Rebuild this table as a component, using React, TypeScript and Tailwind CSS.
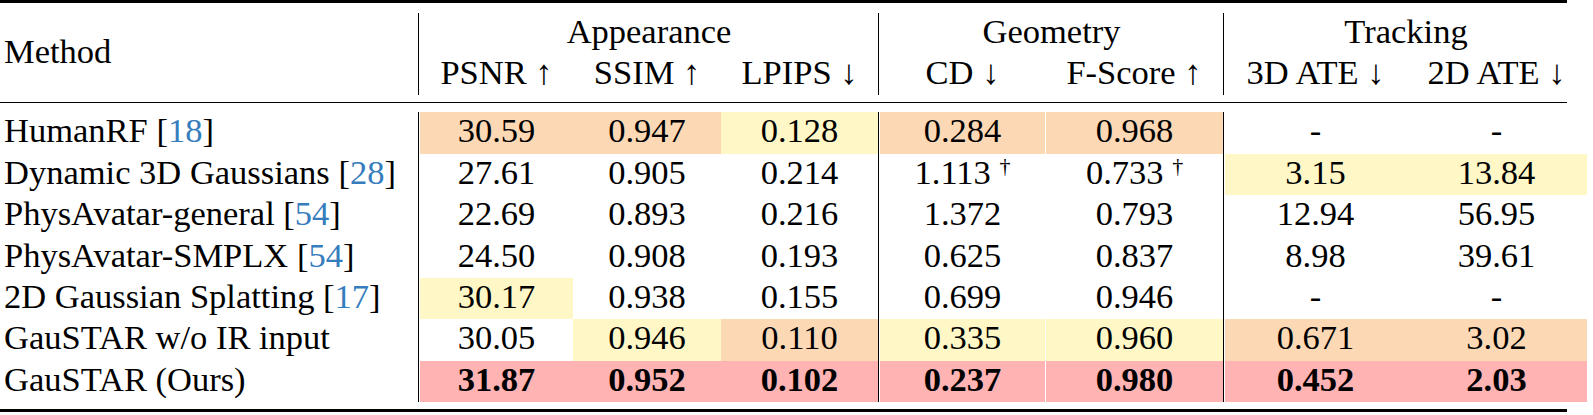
type Shade = '' | 'o' | 'y' | 'r';

interface Row {
  name: string;
  cite?: string;
  vals: string[];
  shade: Shade[];
  dagger?: boolean;
  bold?: boolean;
}

const SHADE: Record<Shade, string> = {
  '': '',
  o: 'bg-[#fdd8b5]',
  y: 'bg-[#fff8c6]',
  r: 'bg-[#ffb3b3]',
};

const ROWS: Row[] = [
  { name: 'HumanRF', cite: '18', vals: ['30.59', '0.947', '0.128', '0.284', '0.968', '-', '-'], shade: ['o', 'o', 'y', 'o', 'o', '', ''] },
  { name: 'Dynamic 3D Gaussians', cite: '28', vals: ['27.61', '0.905', '0.214', '1.113', '0.733', '3.15', '13.84'], shade: ['', '', '', '', '', 'y', 'y'], dagger: true },
  { name: 'PhysAvatar-general', cite: '54', vals: ['22.69', '0.893', '0.216', '1.372', '0.793', '12.94', '56.95'], shade: ['', '', '', '', '', '', ''] },
  { name: 'PhysAvatar-SMPLX', cite: '54', vals: ['24.50', '0.908', '0.193', '0.625', '0.837', '8.98', '39.61'], shade: ['', '', '', '', '', '', ''] },
  { name: '2D Gaussian Splatting', cite: '17', vals: ['30.17', '0.938', '0.155', '0.699', '0.946', '-', '-'], shade: ['y', '', '', '', '', '', ''] },
  { name: 'GauSTAR w/o IR input', vals: ['30.05', '0.946', '0.110', '0.335', '0.960', '0.671', '3.02'], shade: ['', 'y', 'o', 'y', 'y', 'o', 'o'] },
  { name: 'GauSTAR (Ours)', vals: ['31.87', '0.952', '0.102', '0.237', '0.980', '0.452', '2.03'], shade: ['r', 'r', 'r', 'r', 'r', 'r', 'r'], bold: true },
];

const COLS = 'grid grid-cols-[418px_2px_153px_148px_157px_2px_165px_178px_2px_181px_181px]';

function VLine({ className = '' }: { className?: string }) {
  return (
    <div className={`h-full ${className}`}>
      <div className="w-[1.4px] h-full bg-black" />
    </div>
  );
}

function Cell({ value, shade, dagger, bold, split }: { value: string; shade: Shade; dagger?: boolean; bold?: boolean; split?: boolean }) {
  return (
    <div className={`h-[41.4px] text-center ${SHADE[shade]} ${bold ? 'font-bold' : ''} ${split ? 'border-l border-white' : ''}`}>
      {value}
      {dagger && value !== '-' && (
        <>
          {' '}
          <span className="relative -top-[11px] text-[22px]">†</span>
        </>
      )}
    </div>
  );
}

export default function App() {
  return (
    <div className="w-[1593px] h-[415px] bg-white text-black [font-family:'Liberation_Serif','Times_New_Roman',serif] text-[34.5px] leading-[36.8px]">
      <div className="w-[1567px] h-[3px] bg-black" />
      <div className="h-[9.5px]" />

      {/* header */}
      <div className={`${COLS} grid-rows-[41.4px_41.4px]`}>
        <div className="col-start-1 row-start-1 row-span-2 flex items-center pl-[4px] pb-[4px]">Method</div>
        <VLine className="col-start-2 row-start-1 row-span-2" />
        <div className="col-start-3 col-span-3 row-start-1 text-center">Appearance</div>
        <VLine className="col-start-6 row-start-1 row-span-2" />
        <div className="col-start-7 col-span-2 row-start-1 text-center">Geometry</div>
        <VLine className="col-start-9 row-start-1 row-span-2" />
        <div className="col-start-10 col-span-2 row-start-1 text-center">Tracking</div>

        <div className="col-start-3 row-start-2 text-center">PSNR ↑</div>
        <div className="col-start-4 row-start-2 text-center">SSIM ↑</div>
        <div className="col-start-5 row-start-2 text-center">LPIPS ↓</div>
        <div className="col-start-7 row-start-2 text-center">CD ↓</div>
        <div className="col-start-8 row-start-2 text-center">F-Score ↑</div>
        <div className="col-start-10 row-start-2 text-center">3D ATE ↓</div>
        <div className="col-start-11 row-start-2 text-center">2D ATE ↓</div>
      </div>

      <div className="h-[6.5px]" />
      <div className="w-[1567px] h-[1.6px] bg-black" />
      <div className="h-[9px]" />

      {/* body */}
      <div className="flex flex-col">
        {ROWS.map((row) => (
          <div key={row.name} className={`${COLS} h-[41.4px]`}>
            <div className="pl-[4px] whitespace-nowrap">
              {row.name}
              {row.cite && (
                <>
                  {' '}[<span className="text-[#367dbd]">{row.cite}</span>]
                </>
              )}
            </div>
            <VLine />
            <Cell value={row.vals[0]} shade={row.shade[0]} bold={row.bold} />
            <Cell value={row.vals[1]} shade={row.shade[1]} bold={row.bold} />
            <Cell value={row.vals[2]} shade={row.shade[2]} bold={row.bold} />
            <VLine />
            <Cell value={row.vals[3]} shade={row.shade[3]} bold={row.bold} dagger={row.dagger} />
            <Cell value={row.vals[4]} shade={row.shade[4]} bold={row.bold} dagger={row.dagger} split />
            <VLine />
            <Cell value={row.vals[5]} shade={row.shade[5]} bold={row.bold} />
            <Cell value={row.vals[6]} shade={row.shade[6]} bold={row.bold} />
          </div>
        ))}
      </div>

      <div className="h-[7px]" />
      <div className="w-[1567px] h-[3px] bg-black" />
    </div>
  );
}
